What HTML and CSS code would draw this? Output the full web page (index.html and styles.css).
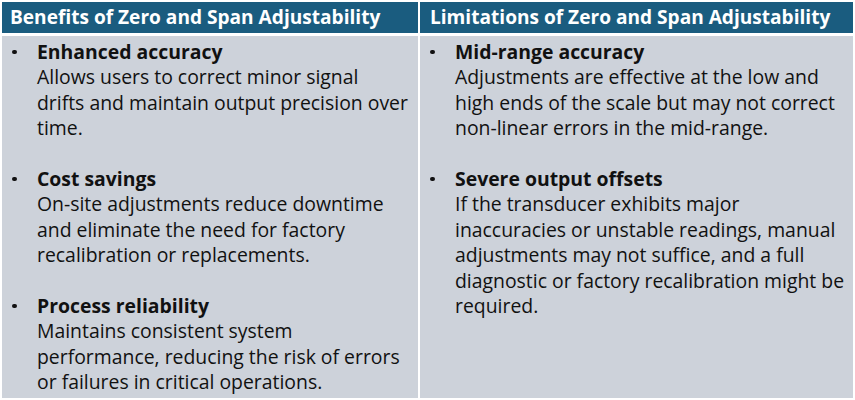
FILE: index.html
```html
<!DOCTYPE html>
<html>
<head>
<meta charset="utf-8">
<link rel="stylesheet" href="styles.css">
</head>
<body>
<div class="table">
  <div class="head">Benefits of Zero and Span Adjustability</div>
  <div class="head">Limitations of Zero and Span Adjustability</div>
  <div class="cell">
    <ul class="list list-left">
      <li><div class="text"><b>Enhanced accuracy</b><br>Allows users to correct minor signal drifts and maintain output precision over time.</div></li>
      <li><div class="text"><b>Cost savings</b><br>On-site adjustments reduce downtime and eliminate the need for factory recalibration or replacements.</div></li>
      <li><div class="text"><b>Process reliability</b><br>Maintains consistent system performance, reducing the risk of errors or failures in critical operations.</div></li>
    </ul>
  </div>
  <div class="cell">
    <ul class="list">
      <li><div class="text"><b>Mid-range accuracy</b><br>Adjustments are effective at the low and high ends of the scale but may not correct non-linear errors in the mid-range.</div></li>
      <li><div class="text"><b>Severe output offsets</b><br>If the transducer exhibits major inaccuracies or unstable readings, manual adjustments may not suffice, and a full diagnostic or factory recalibration might be required.</div></li>
    </ul>
  </div>
</div>
</body>
</html>
```
FILE: styles.css
```css
html, body {
  margin: 0;
  padding: 0;
  background: #ffffff;
}
body {
  font-family: "Open Sans", "Liberation Sans", sans-serif;
  color: #111111;
}
.table {
  display: grid;
  grid-template-columns: 416px 433px;
  grid-template-rows: 31px 362px;
  column-gap: 2px;
  row-gap: 3px;
  padding: 2px 0 0 2px;
  width: 855px;
  height: 400px;
  box-sizing: border-box;
}
.head {
  background: #1a5c7f;
  color: #ffffff;
  font-weight: 700;
  font-size: 19.1px;
  line-height: 31px;
  padding-left: 8px;
  white-space: nowrap;
}
.head + .head {
  padding-left: 10px;
}
.cell {
  background: #cdd2da;
  padding-top: 3px;
}
.list {
  margin: 0;
  padding: 0 7px 0 0;
  list-style: none;
  font-size: 19.4px;
  line-height: 25.4px;
}
.list-left {
  padding-right: 8.5px;
}
.list li {
  display: grid;
  grid-template-columns: 35px 1fr;
  margin-bottom: 25.4px;
}
.list li::before {
  content: "";
  width: 4.5px;
  height: 4.5px;
  border-radius: 50%;
  background: #111111;
  margin: 10.5px 0 0 10px;
}
.list b {
  font-weight: 700;
}
```
